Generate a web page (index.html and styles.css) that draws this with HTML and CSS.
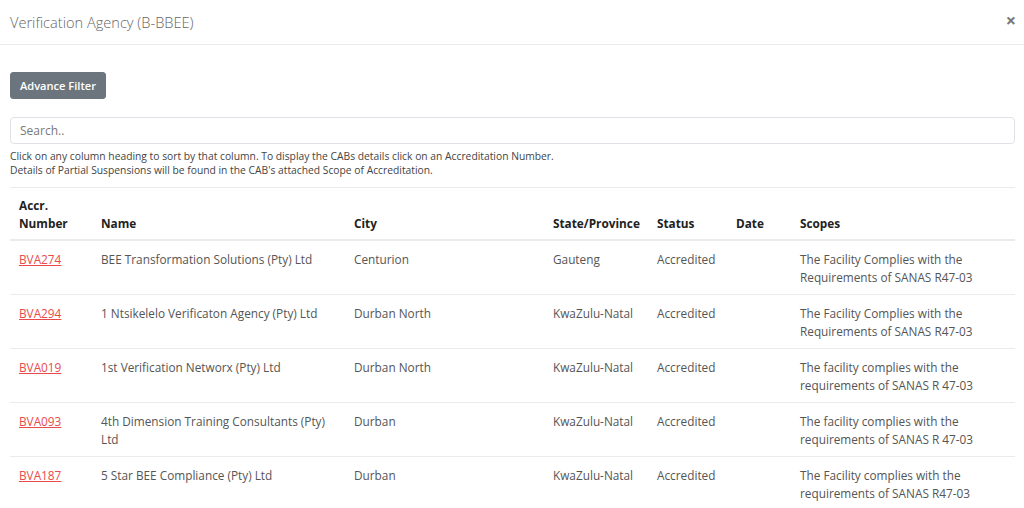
FILE: index.html
```
<!DOCTYPE html>
<html>
<head>
<meta charset="utf-8">
<link rel="stylesheet" href="styles.css">
</head>
<body>
<div class="modal">
  <div class="modal-header">
    <h5 class="modal-title">Verification Agency (B-BBEE)</h5>
    <span class="close">&times;</span>
  </div>
  <div class="modal-body">
    <button class="btn">Advance Filter</button>
    <input class="search" type="text" placeholder="Search..">
    <p class="help">Click on any column heading to sort by that column. To display the CABs details click on an Accreditation Number.<br>Details of Partial Suspensions will be found in the CAB's attached Scope of Accreditation.</p>
    <table class="tbl">
      <colgroup>
        <col class="c1"><col class="c2"><col class="c3"><col class="c4"><col class="c5"><col class="c6"><col class="c7">
      </colgroup>
      <thead>
        <tr><th>Accr.<br>Number</th><th>Name</th><th>City</th><th>State/Province</th><th>Status</th><th>Date</th><th>Scopes</th></tr>
      </thead>
      <tbody>
        <tr><td><a href="#">BVA274</a></td><td>BEE Transformation Solutions (Pty) Ltd</td><td>Centurion</td><td>Gauteng</td><td>Accredited</td><td></td><td>The Facility Complies with the Requirements of SANAS R47-03</td></tr>
        <tr><td><a href="#">BVA294</a></td><td>1 Ntsikelelo Verificaton Agency (Pty) Ltd</td><td>Durban North</td><td>KwaZulu-Natal</td><td>Accredited</td><td></td><td>The Facility Complies with the Requirements of SANAS R47-03</td></tr>
        <tr><td><a href="#">BVA019</a></td><td>1st Verification Networx (Pty) Ltd</td><td>Durban North</td><td>KwaZulu-Natal</td><td>Accredited</td><td></td><td>The facility complies with the requirements of SANAS R 47-03</td></tr>
        <tr><td><a href="#">BVA093</a></td><td>4th Dimension Training Consultants (Pty) Ltd</td><td>Durban</td><td>KwaZulu-Natal</td><td>Accredited</td><td></td><td>The facility complies with the requirements of SANAS R 47-03</td></tr>
        <tr><td><a href="#">BVA187</a></td><td>5 Star BEE Compliance (Pty) Ltd</td><td>Durban</td><td>KwaZulu-Natal</td><td>Accredited</td><td></td><td>The Facility complies with the requirements of SANAS R47-03</td></tr>
      </tbody>
    </table>
  </div>
</div>
</body>
</html>
```
FILE: styles.css
```
html, body {
  margin: 0;
  padding: 0;
  background: #fff;
  overflow: hidden;
  font-family: "Open Sans", "Liberation Sans", sans-serif;
  color: #555;
}
.modal-header {
  height: 44px;
  border-bottom: 1px solid #e9ecef;
  display: flex;
  align-items: center;
  justify-content: space-between;
  padding: 0 10px 0 10px;
}
.modal-title {
  margin: 0;
  font-size: 14.6px;
  font-weight: 300;
  color: #666;
}
.close {
  font-size: 18px;
  font-weight: 700;
  color: #777;
  line-height: 1;
  margin-top: -4px;
  margin-right: -2px;
}
.modal-body {
  padding: 27px 9px 0 10px;
}
.btn {
  display: block;
  font-family: inherit;
  font-size: 11.1px;
  font-weight: 600;
  color: #fff;
  background: #6c757d;
  border: 1px solid #6c757d;
  border-radius: 3px;
  height: 27px;
  width: 96px;
  padding: 0;
  margin: 0 0 18px 0;
}
.search {
  display: block;
  box-sizing: border-box;
  width: 100%;
  height: 27px;
  border: 1px solid #dee2e6;
  border-radius: 4px;
  padding: 0 9px;
  font-family: inherit;
  font-size: 12px;
  color: #555;
  margin: 0;
}
.search::placeholder { color: #777; }
.help {
  margin: 5px 0 0 0;
  font-size: 10.3px;
  line-height: 14px;
  color: #444;
  padding-bottom: 10px;
  border-bottom: 1px solid #e9ecef;
}
.tbl {
  width: 100%;
  border-collapse: collapse;
  table-layout: fixed;
  font-size: 11.8px;
}
.c1 { width: 82px; }
.c2 { width: 253px; }
.c3 { width: 199px; }
.c4 { width: 104px; }
.c5 { width: 79px; }
.c6 { width: 64px; }
.c7 { width: auto; }
.tbl th {
  text-align: left;
  font-weight: 700;
  color: #222;
  line-height: 18px;
  padding: 8px 9px 7px 9px;
  vertical-align: bottom;
  border-bottom: 2px solid #e9ecef;
}
.tbl td {
  line-height: 18px;
  padding: 9px 9px 8px 9px;
  vertical-align: top;
  height: 36px;
  border-bottom: 1px solid #e9ecef;
}
.tbl a {
  color: #e94b4b;
  text-decoration: underline;
}
```
